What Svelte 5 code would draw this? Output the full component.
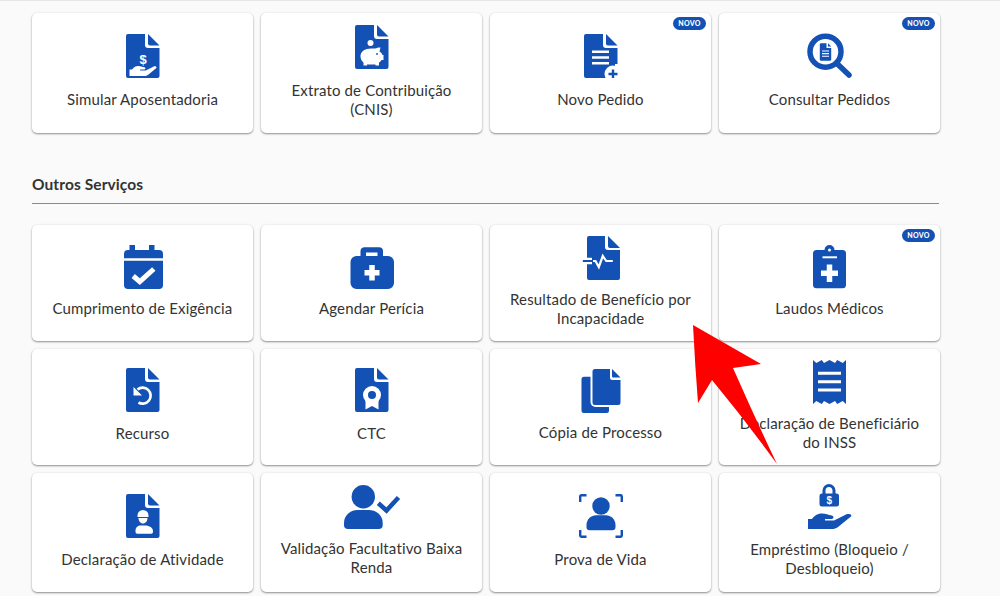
<script>
  const top = [
    { label: 'Simular Aposentadoria', icon: 'simular' },
    { label: 'Extrato de Contribuição (CNIS)', icon: 'cnis' },
    { label: 'Novo Pedido', icon: 'novo', badge: true },
    { label: 'Consultar Pedidos', icon: 'consultar', badge: true }
  ];
  const others = [
    { label: 'Cumprimento de Exigência', icon: 'calendar', tight: true },
    { label: 'Agendar Perícia', icon: 'case', tight: true },
    { label: 'Resultado de Benefício por Incapacidade', icon: 'resultado', tight: true },
    { label: 'Laudos Médicos', icon: 'laudos', badge: true, tight: true },
    { label: 'Recurso', icon: 'recurso' },
    { label: 'CTC', icon: 'ctc' },
    { label: 'Cópia de Processo', icon: 'copia', tight: true },
    { label: 'Declaração de Beneficiário do INSS', icon: 'recibo', tight: true },
    { label: 'Declaração de Atividade', icon: 'atividade' },
    { label: 'Validação Facultativo Baixa Renda', icon: 'validacao', tight: true },
    { label: 'Prova de Vida', icon: 'vida' },
    { label: 'Empréstimo (Bloqueio / Desbloqueio)', icon: 'emprestimo' }
  ];
  const docBody = 'M7 0H24V11Q24 14 27 14H38.5V42a2 2 0 0 1-2 2H7a2 2 0 0 1-2-2V2a2 2 0 0 1 2-2Z';
  const docFold = 'M27 0L38.5 11.5H29Q27 11.5 27 9.5Z';
  const hand = 'M0 6H4C7 2 10 .5 14 .5C18 .5 20 2 24 2.5C26 3 26 5.5 24 6H17V7.5H26L38 1.5C40 .5 44.500 1 43 3.500L30 14C28 15.500 26 16 24 16H0Z';
</script>

{#snippet doc()}
  <path class="blue" d={docBody} />
  <path class="blue" d={docFold} />
{/snippet}

{#snippet glyph(name)}
  {#if name === 'validacao'}
    <svg class="icon wide" viewBox="0 0 55 44" aria-hidden="true">
      <circle class="blue" cx="19.3" cy="11.7" r="11.7" />
      <path class="blue" d="M0 38C0 29 8 25 13 25H25C31 25 38.7 29 38.7 38V40a4 4 0 0 1-4 4H4a4 4 0 0 1-4-4Z" />
      <path class="line-blue" d="M34.3 18.3L42.5 25.5 54.5 12.5" stroke-width="4.500" />
    </svg>
  {:else}
    <svg class="icon" viewBox="0 0 44 44" aria-hidden="true">
      {#if name === 'simular'}
        {@render doc()}
        <text class="sym" x="22" y="30" font-size="13">$</text>
        <path class="white" transform="translate(8.5 31.7) scale(.625 .64)" d={hand} />
      {:else if name === 'cnis'}
        {@render doc()}
        <circle class="white" cx="20.5" cy="18" r="3" />
        <path class="white" d="M10.500 31C10.500 26.500 15 23.500 21 23.500H25C26.500 23 28 22.500 30.500 22.500L29.500 26.500C31 27.500 32 28.500 32.500 30H33.500V35H31.500C31 36 30 37 29 37.500V40.500H25.500V39.500H17V40.500H13.500V37.500C11.500 36 10.500 34 10.500 31Z" />
        <circle class="blue" cx="27" cy="29" r=".9" />
      {:else if name === 'novo'}
        {@render doc()}
        <circle class="white" cx="34" cy="40" r="8.5" />
        <rect x="36" y="30" width="8" height="14" class="white" />
        <path class="line-white" d="M13 17.7H30M13 23.5H30M13 29.3H30" stroke-width="2.5" />
        <path class="line-blue" d="M34 35.5V44M29.5 40H38.5" stroke-width="2.400" />
      {:else if name === 'consultar'}
        <circle class="ring" cx="17.5" cy="17.7" r="15.5" stroke-width="5.5" />
        <path class="line-blue round" d="M30 30.500L41 41" stroke-width="5.500" />
        <path class="blue" d="M13 9.3H18.5V14H23.2V25.5a1.2 1.2 0 0 1-1.2 1.2H13a1.2 1.2 0 0 1-1.2-1.2V10.5a1.2 1.2 0 0 1 1.2-1.2ZM20 9.3L23.2 12.6H20Z" />
        <path class="line-white" d="M14 17H21M14 19.6H21M14 22.2H21" stroke-width="1.1" />
      {:else if name === 'calendar'}
        <path class="blue" d="M8.5 0H14V5H28V0H33.5V5H38a4 4 0 0 1 4 4V13.3H3V9a4 4 0 0 1 4-4H8.5Z" />
        <path class="blue" d="M3 15.7H42V40a4 4 0 0 1-4 4H7a4 4 0 0 1-4-4Z" />
        <path class="line-white" d="M12.2 31L18.8 36.7 32.8 24" stroke-width="5" />
      {:else if name === 'case'}
        <path class="blue" fill-rule="evenodd" d="M14 2.300H29a4 4 0 0 1 4 4V11H38a6 6 0 0 1 6 6V38a6 6 0 0 1-6 6H6.500a6 6 0 0 1-6-6V17a6 6 0 0 1 6-6H10.500V6.300a4 4 0 0 1 3.500-4ZM16 7.500V11H27.500V7.500Z" />
        <path class="line-white" d="M22 20V35.500M14.500 27.700H29.500" stroke-width="5.500" />
      {:else if name === 'resultado'}
        <path class="blue" d="M10 0H26V11Q26 14 29 14H41V42a2 2 0 0 1-2 2H10a2 2 0 0 1-2-2V2a2 2 0 0 1 2-2Z" />
        <path class="blue" d="M29 0L41 12H31Q29 12 29 10Z" />
        <path d="M5 25H13" stroke="#fff" stroke-width="6.500" fill="none" />
        <path class="line-blue" d="M3.800 25H14" stroke-width="2" />
        <path class="line-white" d="M14 25H16.500L19.800 31 23.800 20 27.200 25H33.800" stroke-width="2.200" />
      {:else if name === 'laudos'}
        <rect class="blue" x="5" y="5" width="33" height="38.300" rx="3.500" />
        <circle class="blue" cx="21.500" cy="5" r="5" />
        <circle class="white" cx="21.500" cy="5" r="1.500" />
        <path class="line-white" d="M14.500 12.300H29" stroke-width="2" />
        <path class="line-white" d="M21.500 19.500V37M13 28.300H30" stroke-width="5.500" />
      {:else if name === 'recurso'}
        {@render doc()}
        <path class="line-white" d="M17.500 34.500A8 8 0 1 0 16.500 21.500" stroke-width="2.700" />
        <path class="white" d="M12.500 19V27.500H21Z" />
      {:else if name === 'ctc'}
        {@render doc()}
        <path class="white" d="M15.500 30H28.500V41.500L22 38 15.500 41.500Z" />
        <circle class="white" cx="22" cy="27" r="9" />
        <circle class="blue" cx="22" cy="27" r="4" />
      {:else if name === 'copia'}
        <path class="blue" d="M5 7.700H11.500V33a5 5 0 0 0 5 5H30V41.500a2.500 2.500 0 0 1-2.500 2.500H5a2.500 2.500 0 0 1-2.500-2.500V10.200a2.500 2.500 0 0 1 2.500-2.500Z" />
        <path class="blue" d="M16 0H31V8.500Q31 11 33.500 11H41.500V33.500a2.500 2.500 0 0 1-2.500 2.500H16a2.500 2.500 0 0 1-2.500-2.500V2.500a2.500 2.500 0 0 1 2.500-2.500Z" />
        <path class="blue" d="M33 0L41.500 8.500H34Q33 8.500 33 7.500Z" />
      {:else if name === 'recibo'}
        <path class="blue" d="M5 0L8.300 3 13.800 0 16 3 21.500 0 27 3 29.200 0 34.700 3 38 0V44L34.700 41 29.200 44 27 41 21.500 44 16 41 13.800 44 8.300 41 5 44Z" />
        <path class="line-white" d="M10 13.300H33M10 21.700H33M10 30H33" stroke-width="3" />
      {:else if name === 'atividade'}
        {@render doc()}
        <path class="white" d="M16.500 21.500A5.500 5.500 0 0 1 27.500 21.500V23H16.500Z" />
        <path class="white" d="M17.500 24H26.500C26.500 27 24.500 29.500 22 29.500S17.500 27 17.500 24Z" />
        <path class="white" d="M14.500 37C14.500 33 17 31.500 20 31.500H24C27 31.500 32 33 32 37V38a1.700 1.700 0 0 1-1.700 1.700H16.200a1.700 1.700 0 0 1-1.700-1.700Z" />
      {:else if name === 'vida'}
        <circle class="blue" cx="22" cy="12" r="8.700" />
        <path class="blue" d="M7.500 31C7.500 25 12.500 21.300 17 21.300H27C31.500 21.300 36.500 25 36.500 31V33a3.300 3.300 0 0 1-3.300 3.300H10.800a3.300 3.300 0 0 1-3.300-3.300Z" />
        <path class="line-blue" d="M1.200 8V2.500a1.200 1.200 0 0 1 1.200-1.200H7.500M36.500 1.300H41.600a1.200 1.200 0 0 1 1.200 1.200V8M42.800 36V41.500a1.200 1.200 0 0 1-1.200 1.200H36.500M7.500 42.700H2.400a1.200 1.200 0 0 1-1.200-1.200V36" stroke-width="2.400" />
      {:else if name === 'emprestimo'}
        <path class="ring" d="M16 11V6.500a5 5 0 0 1 10 0V11" stroke-width="3" />
        <rect class="blue" x="11.500" y="9.500" width="19.500" height="13" rx="2.500" />
        <text class="sym" x="21.200" y="20" font-size="10">$</text>
        <path class="blue" transform="translate(0 29)" d={hand} />
      {/if}
    </svg>
  {/if}
{/snippet}

{#snippet card(item)}
  <a class="card" class:tight={item.tight} href="#top">
    {#if item.badge}<span class="badge">NOVO</span>{/if}
    {@render glyph(item.icon)}
    <span class="label">{item.label}</span>
  </a>
{/snippet}

<main class="page">
  <section class="grid first">
    {#each top as item}{@render card(item)}{/each}
  </section>

  <h2 class="title">Outros Serviços</h2>

  <section class="grid rest">
    {#each others as item}{@render card(item)}{/each}
  </section>

  <svg class="arrow" viewBox="0 0 1000 596" aria-hidden="true">
    <path d="M693 325L761 364 733 368Q755 418 777 464 745 420 712 380L698 403Q695 365 693 325Z" />
  </svg>
</main>

<style>
  :global(body) {
    margin: 0;
    background: #fafafa;
  }
  .page {
    position: relative;
    box-sizing: border-box;
    height: 596px;
    overflow: hidden;
    padding: 12px 60px 0 32px;
    border-top: 1px solid #e6e6e6;
    font-family: Lato, "Open Sans", sans-serif;
    color: #333;
  }
  .grid {
    display: grid;
    grid-template-columns: repeat(4, 221px);
    column-gap: 8px;
    row-gap: 8px;
  }
  .first {
    grid-template-rows: 120px;
  }
  .rest {
    grid-template-rows: 116px 116px 119px;
  }
  .title {
    margin: 42px 1px 21px 0;
    padding-bottom: 9px;
    border-bottom: 1px solid #8a8a8a;
    font-size: 15.5px;
    line-height: 19px;
    font-weight: 700;
    letter-spacing: 0.1px;
    color: #333;
  }
  .card {
    position: relative;
    box-sizing: border-box;
    display: flex;
    flex-direction: column;
    align-items: center;
    justify-content: center;
    gap: 12px;
    padding: 0 18px 3px;
    background: #fff;
    border-radius: 5px;
    box-shadow: 0 1px 2px rgba(0, 0, 0, 0.42), 0 0 3px rgba(0, 0, 0, 0.06);
    text-decoration: none;
    color: #333;
  }
  .card.tight {
    gap: 10px;
  }
  .label {
    font-size: 15px;
    line-height: 19px;
    letter-spacing: 0.15px;
    text-align: center;
  }
  .badge {
    position: absolute;
    top: 4px;
    right: 5px;
    width: 33px;
    height: 13px;
    border-radius: 7px;
    background: #1351b4;
    color: #fff;
    font-size: 7px;
    line-height: 13px;
    font-weight: 900;
    letter-spacing: 0.3px;
    text-align: center;
  }
  .icon {
    display: block;
    width: 44px;
    height: 44px;
    flex: none;
    overflow: visible;
  }
  .icon.wide {
    width: 55px;
  }
  .blue {
    fill: #1351b4;
  }
  .white {
    fill: #fff;
  }
  .line-blue,
  .line-white,
  .ring {
    fill: none;
  }
  .line-blue,
  .ring {
    stroke: #1351b4;
  }
  .line-white {
    stroke: #fff;
  }
  .round {
    stroke-linecap: round;
  }
  .sym {
    fill: #fff;
    font-family: "Liberation Sans", sans-serif;
    font-weight: 700;
    text-anchor: middle;
  }
  .arrow {
    position: absolute;
    left: 0;
    top: -1px;
    width: 1000px;
    height: 596px;
    pointer-events: none;
  }
  .arrow path {
    fill: #fe0000;
  }
</style>
